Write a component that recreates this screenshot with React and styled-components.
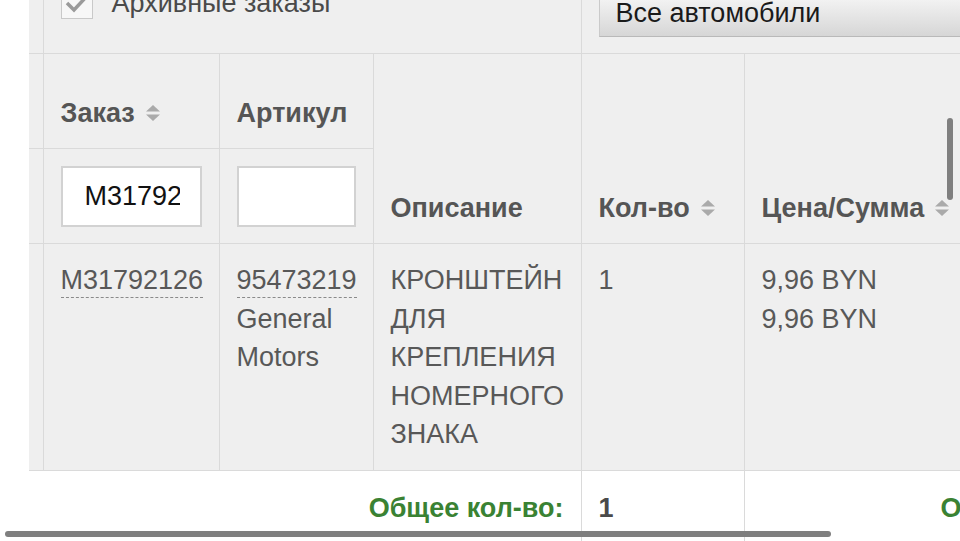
import React from 'react';
import styled, { createGlobalStyle } from 'styled-components';

const GlobalStyle = createGlobalStyle`
  html, body {
    margin: 0;
    padding: 0;
    background: #fff;
  }
  body {
    font-family: "Liberation Sans", Arial, sans-serif;
  }
`

const Viewport = styled.div`
  position: relative;
  width: 960px;
  height: 541px;
  overflow: hidden;
  background: #fff;
`

const Table = styled.table`
  margin: -30px 0 0 29px;
  border-collapse: collapse;
  table-layout: fixed;
  width: 1131px;
  font-size: 27px;
  line-height: 38.5px;
  color: #585858;
`

const Row = styled.tr`
  height: ${p => p.$height || 'auto'};
`

const Cell = styled.td`
  background: ${p => (p.$white ? '#fff' : '#efefef')};
  border: 1px solid #dadada;
  border-top: ${p => (p.$noTop ? 'none' : '1px solid #dadada')};
  padding: 17px 17px 16px;
  vertical-align: top;
  text-align: ${p => p.$align || 'left'};
  white-space: ${p => (p.$nowrap ? 'nowrap' : 'normal')};
  &:first-child {
    border-left: none;
  }
`

const HeadCell = styled(Cell).attrs({ as: 'th' })`
  vertical-align: bottom;
  font-weight: bold;
  color: #555;
  white-space: nowrap;
`

const FootCell = styled(Cell)`
  padding: 18px 17px 15px;
  padding-left: ${p => p.$indent || '17px'};
  font-weight: bold;
  color: ${p => (p.$green ? '#3a8233' : '#4a4a4a')};
  white-space: nowrap;
`

const CheckLabel = styled.label`
  display: flex;
  align-items: center;
  gap: 19px;
  height: 32px;
  color: #4a4a4a;
  white-space: nowrap;
`

const CheckBox = styled.span`
  display: inline-flex;
  align-items: center;
  justify-content: center;
  width: 30px;
  height: 30px;
  border: 1px solid #c9c9c9;
  background: #f7f7f7;
  box-sizing: content-box;
`

const Select = styled.div`
  height: 50px;
  width: 420px;
  box-sizing: border-box;
  padding: 3px 16px 0;
  display: flex;
  align-items: center;
  border: 1px solid #cacaca;
  border-bottom-color: #b9b9b9;
  background: linear-gradient(#fbfbfb, #d6d6d6);
  color: #1a1a1a;
  font-size: 27px;
  white-space: nowrap;
`

const SortTitle = styled.span`
  display: inline-flex;
  align-items: center;
  gap: 10px;
`

const FilterInput = styled.input`
  display: block;
  width: 100%;
  height: 61px;
  box-sizing: border-box;
  border: 2px solid #d2d2d2;
  background: #fff;
  padding: 0 20px 0 22px;
  font-family: "Liberation Sans", Arial, sans-serif;
  font-size: 27px;
  color: #111;
  outline: none;
`

const Dotted = styled.span`
  border-bottom: 1px dashed #8a8a8a;
  padding-bottom: 2px;
`

const HScroll = styled.div`
  position: absolute;
  left: 5px;
  top: 531px;
  width: 826px;
  height: 6px;
  border-radius: 3px;
  background: #7f7f7f;
`

const VScroll = styled.div`
  position: absolute;
  left: 947px;
  top: 118px;
  width: 6px;
  height: 82px;
  border-radius: 3px;
  background: #7f7f7f;
`

const SortIcon = () => (
  <svg width="16" height="18" viewBox="0 0 16 18">
    <path d="M8 1 L15 7.5 H1 Z" fill="#aaa" />
    <path d="M8 17 L15 10.5 H1 Z" fill="#aaa" />
  </svg>
)

const Check = () => (
  <svg width="24" height="20" viewBox="0 0 24 20">
    <path d="M2 10 L9 17 L22 3" fill="none" stroke="#9a9a9a" strokeWidth="3.5" />
  </svg>
)

const Sortable = ({ children }) => (
  <SortTitle>
    {children}
    <SortIcon />
  </SortTitle>
)

const App = () => {
  return (
    <Viewport>
      <GlobalStyle />
      <Table>
        <colgroup>
          <col style={{ width: 14 }} />
          <col style={{ width: 176 }} />
          <col style={{ width: 154 }} />
          <col style={{ width: 208 }} />
          <col style={{ width: 163 }} />
          <col style={{ width: 416 }} />
        </colgroup>
        <tbody>
          <Row>
            <Cell $noTop />
            <Cell $noTop colSpan={3}>
              <CheckLabel>
                <CheckBox><Check /></CheckBox>
                Архивные заказы
              </CheckLabel>
            </Cell>
            <Cell $noTop colSpan={2}>
              <Select>Все автомобили</Select>
            </Cell>
          </Row>
          <Row $height="95px">
            <Cell />
            <HeadCell><Sortable>Заказ</Sortable></HeadCell>
            <HeadCell>Артикул</HeadCell>
            <HeadCell rowSpan={2}>Описание</HeadCell>
            <HeadCell rowSpan={2}><Sortable>Кол-во</Sortable></HeadCell>
            <HeadCell rowSpan={2}><Sortable>Цена/Сумма</Sortable></HeadCell>
          </Row>
          <Row $height="95px">
            <Cell />
            <Cell><FilterInput defaultValue="M31792126" /></Cell>
            <Cell><FilterInput defaultValue="" /></Cell>
          </Row>
          <Row>
            <Cell />
            <Cell><Dotted>M31792126</Dotted></Cell>
            <Cell>
              <Dotted>95473219</Dotted>
              <br />
              General Motors
            </Cell>
            <Cell>КРОНШТЕЙН ДЛЯ КРЕПЛЕНИЯ НОМЕРНОГО ЗНАКА</Cell>
            <Cell>1</Cell>
            <Cell $nowrap>
              9,96 BYN
              <br />
              9,96 BYN
            </Cell>
          </Row>
          <Row>
            <FootCell $white $green colSpan={4} $align="right">Общее кол-во:</FootCell>
            <FootCell $white>1</FootCell>
            <FootCell $white $green $indent="196px">Общая сумма:</FootCell>
          </Row>
        </tbody>
      </Table>
      <HScroll />
      <VScroll />
    </Viewport>
  );
};

export default App;
